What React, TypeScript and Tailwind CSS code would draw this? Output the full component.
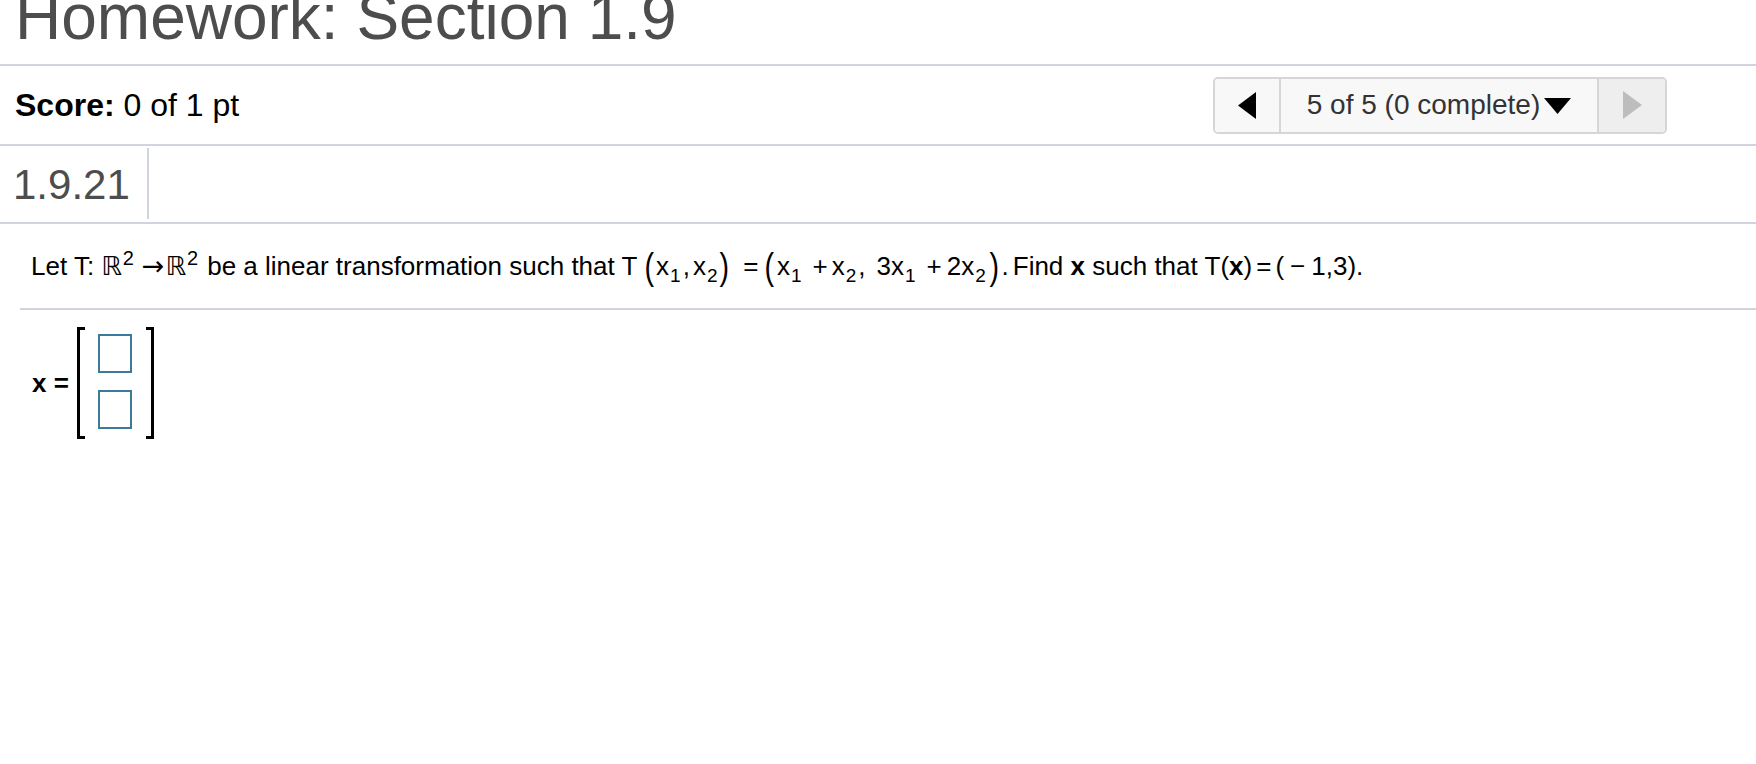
import React from "react";

const line = "border-[#d0d4de]";
const dejavu = { fontFamily: '"DejaVu Sans", sans-serif' };

function Sub({ children }: { children: React.ReactNode }) {
  return <span className="relative top-[7px] text-[19px] leading-none ml-[1px]">{children}</span>;
}
function Sup({ children }: { children: React.ReactNode }) {
  return <span className="relative top-[-10px] text-[20px] leading-none ml-[1px]">{children}</span>;
}
function Paren({ children, className = "" }: { children: React.ReactNode; className?: string }) {
  return <span className={`inline-block scale-y-[1.45] scale-x-[1.1] font-light ${className}`}>{children}</span>;
}

export default function App() {
  return (
    <div className="w-[1756px] h-[764px] bg-white overflow-hidden text-black" style={{ fontFamily: '"Liberation Sans", Arial, sans-serif' }}>
      {/* Title */}
      <div className={`h-[66px] overflow-hidden border-b-2 ${line}`}>
        <h1 className="mt-[-15px] pl-[15px] text-[64px] leading-[64px] text-[#4d4d4d] whitespace-nowrap">Homework: Section 1.9</h1>
      </div>

      {/* Score row */}
      <div className={`h-[80px] flex items-center justify-between pl-[15px] pr-[89px] border-b-2 ${line}`}>
        <div className="text-[32px] whitespace-nowrap">
          <span className="font-bold">Score:</span> 0 of 1 pt
        </div>
        <div className="flex h-[57px] w-[454px] rounded-[5px] border-2 border-[#d6d6d6] overflow-hidden">
          <div className="w-[66px] flex items-center justify-center bg-[#f8f8f8] border-r-2 border-[#d6d6d6]">
            <svg width="18" height="27" viewBox="0 0 18 27"><polygon points="18,0 18,27 0,13.5" fill="#000" /></svg>
          </div>
          <div className="w-[318px] flex items-center justify-center gap-[4px] bg-[#f8f8f8] border-r-2 border-[#d6d6d6] text-[28px] text-[#333] whitespace-nowrap">
            <span>5 of 5 (0 complete)</span>
            <svg width="27" height="16" viewBox="0 0 27 16" className="mt-[2px]"><polygon points="0,0 27,0 13.5,16" fill="#000" /></svg>
          </div>
          <div className="flex-1 flex items-center justify-center bg-[#eeeeee]">
            <svg width="19" height="28" viewBox="0 0 19 28"><polygon points="0,0 19,14 0,28" fill="#bdbdbd" /></svg>
          </div>
        </div>
      </div>

      {/* Question number row */}
      <div className={`h-[78px] flex items-start border-b-2 ${line}`}>
        <div className="mt-[2px] h-[71px] w-[149px] border-r-2 border-[#d0d4de] flex items-center pl-[13px] pt-[2px] text-[42px] text-[#4d4d4d]">1.9.21</div>
      </div>

      {/* Problem text */}
      <div className="pl-[20px]">
        <div className={`h-[86px] pt-[27px] pl-[11px] border-b-2 ${line}`}>
          <p className="text-[26px] leading-[30px] whitespace-nowrap">
            Let T:<span style={dejavu} className="ml-[7px] text-[26px]">ℝ</span><Sup>2</Sup>
            <span style={dejavu} className="ml-[8px] text-[27px]">→</span>
            <span style={dejavu} className="ml-[1px] text-[26px]">ℝ</span><Sup>2</Sup>
            <span className="ml-[9px]">be a linear transformation such that T</span>
            <Paren className="ml-[8px]">(</Paren>
            <span className="ml-[2px]">x</span><Sub>1</Sub>
            <span className="ml-[2px]">,</span>
            <span className="ml-[3px]">x</span><Sub>2</Sub>
            <Paren className="ml-[3px]">)</Paren>
            <span className="ml-[14px]">=</span>
            <Paren className="ml-[7px]">(</Paren>
            <span className="ml-[3px]">x</span><Sub>1</Sub>
            <span className="ml-[11px]">+</span>
            <span className="ml-[4px]">x</span><Sub>2</Sub>
            <span className="ml-[2px]">,</span>
            <span className="ml-[11px]">3x</span><Sub>1</Sub>
            <span className="ml-[11px]">+</span>
            <span className="ml-[5px]">2x</span><Sub>2</Sub>
            <Paren className="ml-[4px]">)</Paren>
            <span className="ml-[3px]">.</span>
            <span className="ml-[4px]">Find </span><span className="font-bold">x</span> such that T(<span className="font-bold">x</span>)
            <span className="ml-[4px]">=</span>
            <span className="ml-[4px]">(</span>
            <span className="ml-[6px]">−</span>
            <span className="ml-[6px]">1,3).</span>
          </p>
        </div>
      </div>

      {/* Matrix answer */}
      <div className="pt-[17px] pl-[32px] flex items-center">
        <span className="font-bold text-[26px] mr-[8px]">x =</span>
        <div className="w-[8px] h-[112px] border-l-[3px] border-t-[3px] border-b-[3px] border-black" />
        <div className="flex flex-col gap-[17px] ml-[13px] mr-[14px] py-[7px] pb-[10px]">
          <div className="w-[34px] h-[39px] border-2 border-[#3a7b9c]" />
          <div className="w-[34px] h-[39px] border-2 border-[#3a7b9c]" />
        </div>
        <div className="w-[8px] h-[112px] border-r-[3px] border-t-[3px] border-b-[3px] border-black" />
      </div>
    </div>
  );
}
